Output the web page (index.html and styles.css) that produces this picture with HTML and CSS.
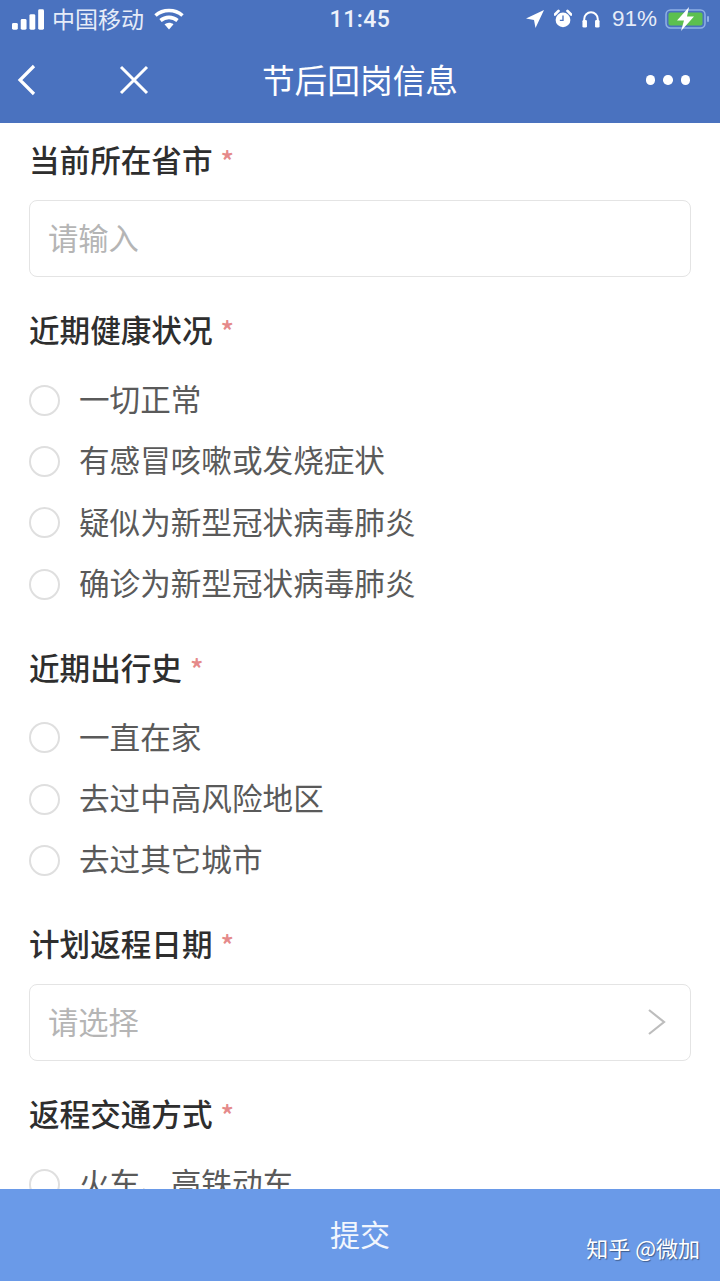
FILE: index.html
```html
<!DOCTYPE html>
<html lang="zh">
<head>
  <meta charset="UTF-8" />
  <title>节后回岗信息</title>
  <link rel="stylesheet" href="styles.css">
</head>
<body>
  <div class="phone">
    <header class="top">
      <div class="status">
        <div class="status-left">
          <svg class="signal" width="32" height="21" viewBox="0 0 33 21"><rect x="0" y="14" width="6" height="7" rx="1.5"/><rect x="9" y="10" width="6" height="11" rx="1.5"/><rect x="18" y="5" width="6" height="16" rx="1.5"/><rect x="27" y="0" width="6" height="21" rx="1.5"/></svg>
          <span class="carrier">中国移动</span>
          <svg class="wifi" width="30" height="22" viewBox="0 0 30 22"><path d="M1.5 7.5C9 .8 21 .8 28.5 7.5" fill="none" stroke="#fff" stroke-width="3.6"/><path d="M6.5 12.5c5-4.2 12-4.2 17 0" fill="none" stroke="#fff" stroke-width="3.6"/><path d="M10.5 16.2c2.8-2 6.2-2 9 0L15 21.5z" fill="#fff"/></svg>
        </div>
        <span class="clock">11:45</span>
        <div class="status-right">
          <svg width="18" height="18" viewBox="0 0 18 18"><path d="M18 0 0 8.500l8 1.500 1.500 8z" fill="#fff"/></svg>
          <svg width="18" height="20" viewBox="0 0 20 22"><circle cx="10" cy="12" r="8.200" fill="#fff"/><path d="M10 7v5.500h-3.500" fill="none" stroke="#4a72bf" stroke-width="1.500"/><path d="M1 6 5 2M19 6l-4-4" stroke="#fff" stroke-width="3" stroke-linecap="round"/></svg>
          <svg width="18" height="18" viewBox="0 0 20 20"><path d="M2.500 16V10a7.500 7.500 0 0 1 15 0v6" fill="none" stroke="#fff" stroke-width="2.200"/><rect x="0.500" y="11" width="5" height="8.500" rx="1.500" fill="#fff"/><rect x="14.500" y="11" width="5" height="8.500" rx="1.500" fill="#fff"/></svg>
          <span class="percent">91%</span>
          <svg class="battery" width="46" height="24" viewBox="0 0 46 24"><rect x="1" y="3" width="39" height="18" rx="4.500" fill="none" stroke="#8fb0e6" stroke-width="1.500"/><rect x="3.500" y="5.500" width="34" height="13" rx="2" fill="#5cc04f"/><rect x="42" y="9" width="2" height="6" rx="1" fill="#8fb0e6"/><path d="M24 0 12 13.500h7L16 24l13-14.500h-7z" fill="#fff"/></svg>
        </div>
      </div>
      <nav class="navbar">
        <div class="nav-icons">
          <svg width="22" height="32" viewBox="0 0 22 32"><path d="M18 2 4 16l14 14" fill="none" stroke="#fff" stroke-width="3.200"/></svg>
          <svg width="30" height="30" viewBox="0 0 30 30"><path d="M2 2l26 26M28 2 2 28" fill="none" stroke="#fff" stroke-width="3"/></svg>
        </div>
        <h1 class="title">节后回岗信息</h1>
        <div class="dots"><i></i><i></i><i></i></div>
      </nav>
    </header>

    <main class="form">
      <section class="field">
        <div class="label">当前所在省市<em>*</em></div>
        <div class="input">请输入</div>
      </section>

      <section class="field">
        <div class="label">近期健康状况<em>*</em></div>
        <div class="options">
          <div class="option"><span class="radio"></span>一切正常</div>
          <div class="option"><span class="radio"></span>有感冒咳嗽或发烧症状</div>
          <div class="option"><span class="radio"></span>疑似为新型冠状病毒肺炎</div>
          <div class="option"><span class="radio"></span>确诊为新型冠状病毒肺炎</div>
        </div>
      </section>

      <section class="field">
        <div class="label">近期出行史<em>*</em></div>
        <div class="options">
          <div class="option"><span class="radio"></span>一直在家</div>
          <div class="option"><span class="radio"></span>去过中高风险地区</div>
          <div class="option"><span class="radio"></span>去过其它城市</div>
        </div>
      </section>

      <section class="field">
        <div class="label">计划返程日期<em>*</em></div>
        <div class="input select">请选择
          <svg width="20" height="28" viewBox="0 0 20 28"><path d="M2 2l15 12L2 26" fill="none" stroke="#bdbdbd" stroke-width="2.200"/></svg>
        </div>
      </section>

      <section class="field">
        <div class="label">返程交通方式<em>*</em></div>
        <div class="options">
          <div class="option"><span class="radio"></span>火车、高铁动车</div>
        </div>
      </section>
    </main>

    <footer class="submit">
      提交
      <span class="mark">知乎 @微加</span>
    </footer>
  </div>
</body>
</html>
```

FILE: styles.css
```css
:root {
  --blue: #4a72bf;
  --btn: #6a9ae8;
  --line: #e4e4e4;
}
* {
  margin: 0; padding: 0; box-sizing: border-box;
  font-family: "Noto Sans CJK SC", "Liberation Sans", sans-serif;
}
body {
  background: #fff;
  overflow: hidden;
}
.phone {
  position: relative;
  width: 720px;
  height: 1281px;
  overflow: hidden;
}

.top {
  background: var(--blue);
  color: #fff;
  height: 123px;
}
.status {
  height: 38px;
  padding: 0 9px 0 12px;
  display: flex;
  justify-content: space-between;
  align-items: center;
  position: relative;
}
.status-left, .status-right {
  display: flex;
  align-items: center;
}
.signal { fill: #fff; margin-right: 8px; }
.carrier { font-size: 23px; line-height: 30px; padding-bottom: 2px; color: #e6ecf8; }
.wifi { margin-left: 10px; }
.clock {
  position: absolute;
  left: 0; right: 0;
  text-align: center;
  font-size: 23px;
  font-family: Roboto, "Liberation Sans", sans-serif;
  font-weight: 500;
  letter-spacing: 0.500px;
  color: #eef2fb;
}
.status-right { gap: 10px; }
.percent {
  font-size: 22.500px;
  font-family: "Liberation Sans", sans-serif;
  color: #e6ecf8;
  margin: 0 -2px 0 2px;
}
.navbar {
  height: 84px;
  padding: 0 30px 0 16px;
  display: flex;
  align-items: center;
  justify-content: space-between;
  position: relative;
}
.nav-icons {
  display: flex;
  align-items: center;
  gap: 81px;
}
.title {
  position: absolute;
  left: 0; right: 0;
  text-align: center;
  font-size: 32.700px;
  font-weight: 400;
  line-height: 44px;
  padding-bottom: 2px;
}
.dots { display: flex; gap: 8px; }
.dots i {
  display: block;
  width: 9.500px; height: 9.500px;
  border-radius: 50%;
  background: #fff;
}

.form { padding: 18px 29px 0; }
.field { margin-bottom: 34px; }
.label {
  height: 40px;
  line-height: 36px;
  font-size: 30.600px;
  font-weight: 500;
  color: #2e2e2e;
  white-space: nowrap;
}
.label em {
  font-style: normal;
  font-size: 28px;
  color: #e58a8a;
  margin-left: 8px;
}
.input {
  margin-top: 19px;
  height: 77px;
  border: 1.500px solid var(--line);
  border-radius: 8px;
  padding: 0 23px 4px 18px;
  display: flex;
  align-items: center;
  justify-content: space-between;
  font-size: 30.300px;
  color: #b5b5b5;
}
.input svg { margin-top: 2px; }
.options { margin-top: 18.500px; }
.option {
  height: 61.300px;
  padding-bottom: 4px;
  display: flex;
  align-items: center;
  font-size: 30.600px;
  color: #5a5a5a;
  white-space: nowrap;
}
.radio {
  flex: none;
  width: 31px; height: 31px;
  border: 2px solid #dfdfdf;
  border-radius: 50%;
  margin: 4px 19px 0 0;
}

.submit {
  position: absolute;
  left: 0; right: 0; bottom: 0;
  height: 92px;
  padding-bottom: 4px;
  background: var(--btn);
  color: #f2f6fd;
  font-size: 30px;
  display: flex;
  align-items: center;
  justify-content: center;
}
.mark {
  position: absolute;
  right: 20px;
  top: 43px;
  font-size: 22px;
  line-height: 30px;
  color: #fff;
  text-shadow: 1px 1px 1px rgba(0,0,0,0.4);
}
```
